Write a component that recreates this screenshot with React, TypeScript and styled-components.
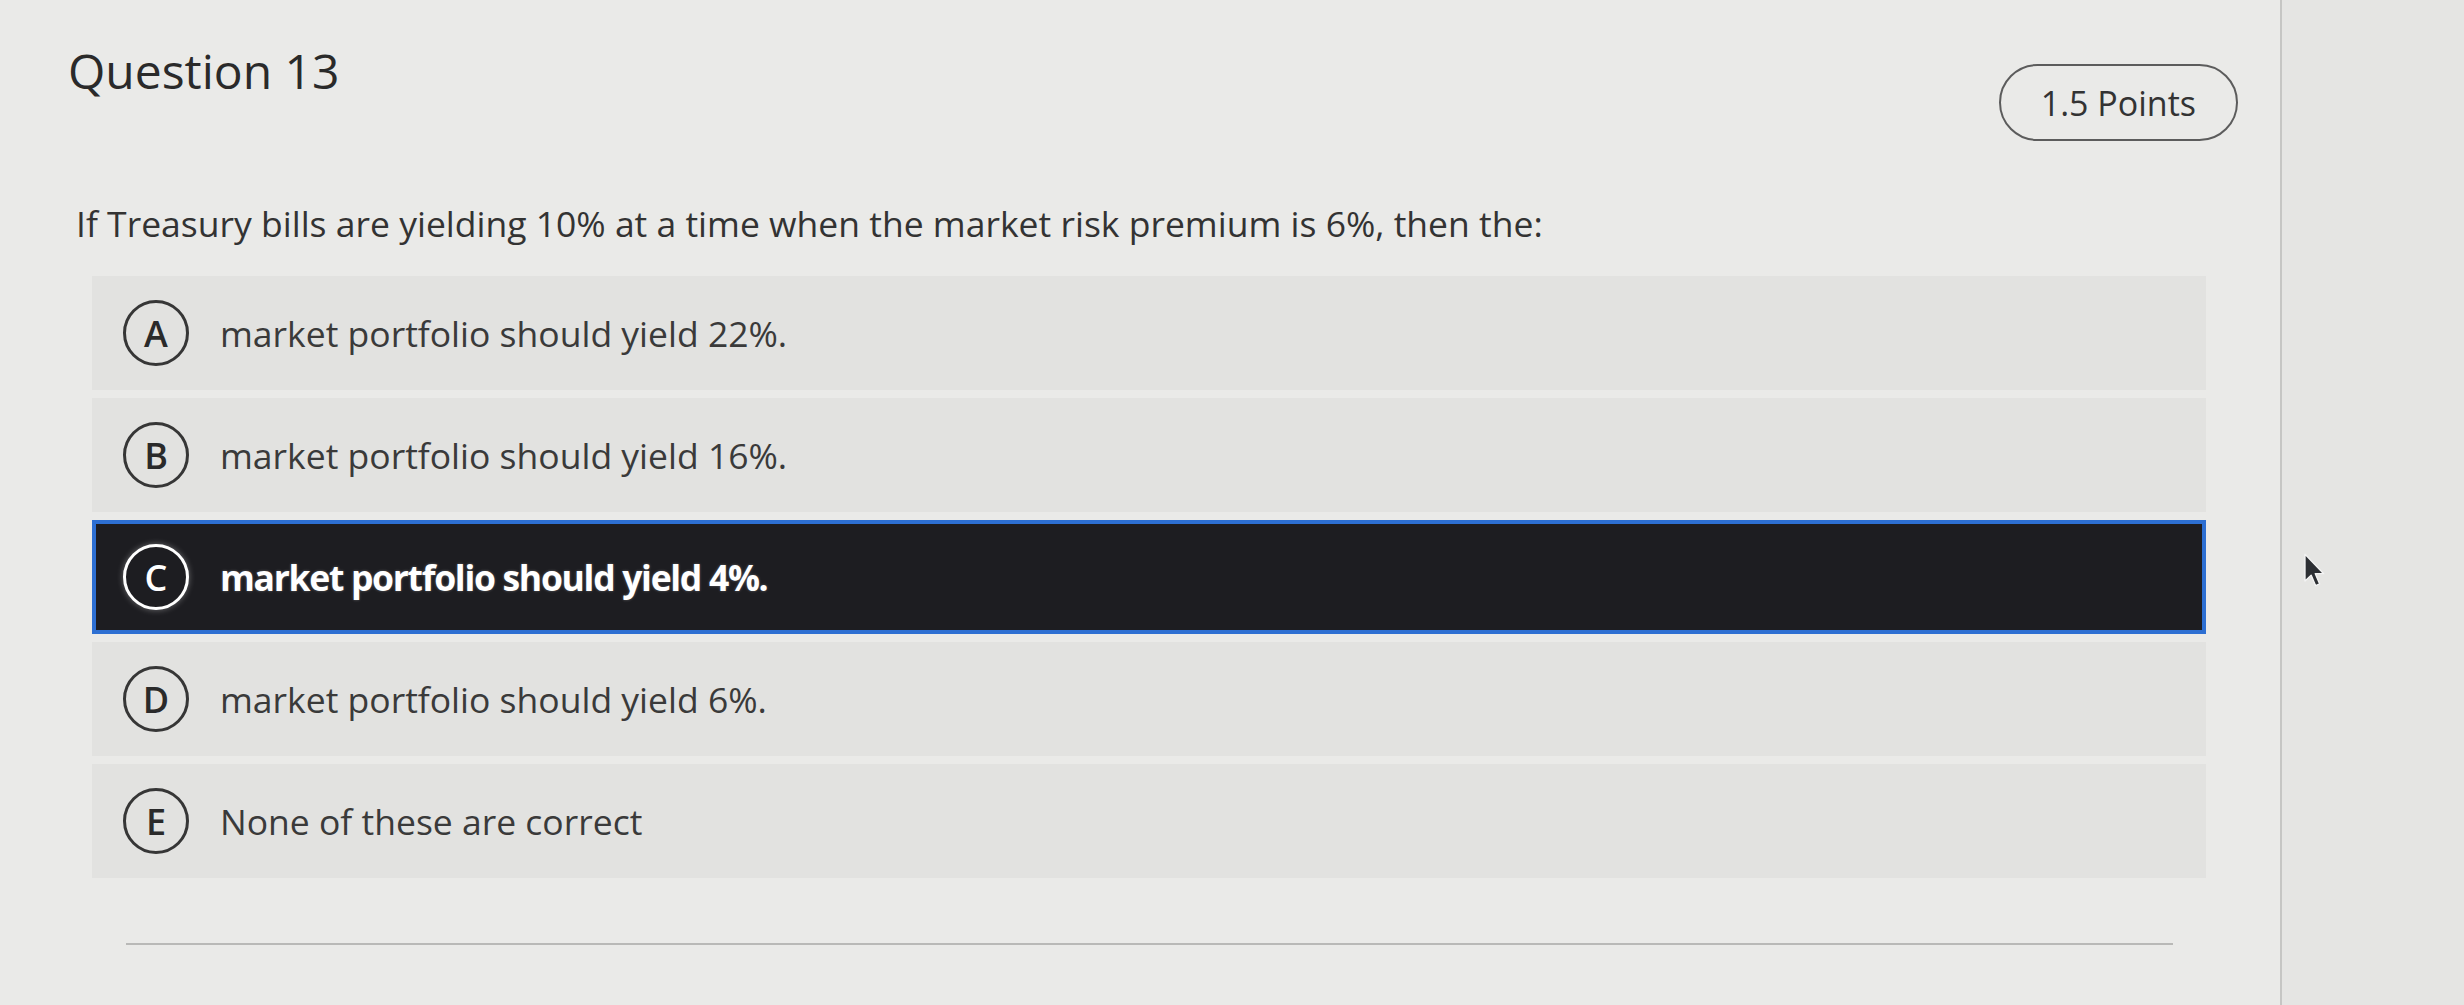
import { FunctionComponent } from 'react'
import styled, { createGlobalStyle } from 'styled-components'

interface Choice {
  letter: string
  text: string
  selected?: boolean
}

const choices: Choice[] = [
  { letter: 'A', text: 'market portfolio should yield 22%.' },
  { letter: 'B', text: 'market portfolio should yield 16%.' },
  { letter: 'C', text: 'market portfolio should yield 4%.', selected: true },
  { letter: 'D', text: 'market portfolio should yield 6%.' },
  { letter: 'E', text: 'None of these are correct' },
]

const App: FunctionComponent = () => {
  return (
    <>
      <GlobalStyle />
      <Page>
        <Main>
          <Header>
            <Title>Question 13</Title>
            <Points>1.5 Points</Points>
          </Header>
          <Prompt>
            If Treasury bills are yielding 10% at a time when the market risk premium is 6%, then the:
          </Prompt>
          <Options>
            {choices.map((c) => (
              <Option key={c.letter} $selected={!!c.selected}>
                <Letter $selected={!!c.selected}>{c.letter}</Letter>
                <OptionText $selected={!!c.selected}>{c.text}</OptionText>
              </Option>
            ))}
          </Options>
          <Divider />
        </Main>
        <Side>
          <Cursor width="24" height="36" viewBox="0 0 17 27">
            <path
              d="M1 1 L1 21 L5.6 16.6 L9 24.5 L12 23.2 L8.7 15.5 L15 15.5 Z"
              fill="#2c2f33"
              stroke="#f4f4f4"
              strokeWidth="1"
              strokeLinejoin="round"
            />
          </Cursor>
        </Side>
      </Page>
    </>
  )
}

export default App

const GlobalStyle = createGlobalStyle`
  html, body {
    margin: 0;
    padding: 0;
    background: #e9e9e7;
    font-family: "Open Sans", "Noto Sans", sans-serif;
  }
`

const Page = styled.div`
  display: flex;
  width: 2464px;
  height: 1005px;
  overflow: hidden;
  background: #eaeae8;
`

const Main = styled.div`
  width: 2280px;
  flex-shrink: 0;
  display: flex;
  flex-direction: column;
  border-right: 2px solid #c6c6c4;
`

const Header = styled.div`
  display: flex;
  justify-content: space-between;
  align-items: flex-start;
  padding: 47px 42px 0 68px;
`

const Title = styled.h1`
  margin: 0;
  font-size: 48px;
  line-height: 48px;
  font-weight: 400;
  color: #2a2a2a;
`

const Points = styled.div`
  margin-top: 17px;
  height: 77px;
  box-sizing: border-box;
  display: inline-flex;
  align-items: center;
  padding: 0 40px;
  border: 2px solid #5c5c5c;
  border-radius: 40px;
  font-size: 34px;
  color: #333;
`

const Prompt = styled.p`
  margin: 62px 0 0 76px;
  font-size: 35.5px;
  line-height: 40px;
  color: #333;
`

const Options = styled.div`
  margin: 33px 0 0 92px;
  width: 2114px;
  display: flex;
  flex-direction: column;
  gap: 8px;
`

const Option = styled.div<{ $selected: boolean }>`
  height: 114px;
  box-sizing: border-box;
  display: flex;
  align-items: center;
  gap: 31px;
  padding-left: 27px;
  background: ${(p) => (p.$selected ? '#1d1d21' : '#e2e2e0')};
  border: 4px solid ${(p) => (p.$selected ? '#2d6fd2' : 'transparent')};
`

const Letter = styled.span<{ $selected: boolean }>`
  width: 66px;
  height: 66px;
  box-sizing: border-box;
  border-radius: 50%;
  display: flex;
  align-items: center;
  justify-content: center;
  border: 3px solid ${(p) => (p.$selected ? '#ffffff' : '#363636')};
  background: ${(p) => (p.$selected ? '#1d1d21' : 'transparent')};
  color: ${(p) => (p.$selected ? '#ffffff' : '#2a2a2a')};
  font-size: 36px;
  font-weight: 600;
  box-shadow: ${(p) => (p.$selected ? '0 0 6px rgba(255,255,255,0.35)' : 'none')};
`

const OptionText = styled.span<{ $selected: boolean }>`
  font-size: 35.5px;
  color: ${(p) => (p.$selected ? '#ffffff' : '#3a3a3a')};
  font-weight: ${(p) => (p.$selected ? 700 : 400)};
  letter-spacing: ${(p) => (p.$selected ? '-1.3px' : '0')};
  text-shadow: ${(p) => (p.$selected ? '0 0 3px rgba(255,255,255,0.3)' : 'none')};
`

const Divider = styled.div`
  margin: 65px 0 0 126px;
  width: 2047px;
  border-top: 2px solid #b9b9b7;
`

const Side = styled.div`
  flex: 1;
  position: relative;
  background: #e5e5e3;
`

const Cursor = styled.svg`
  position: absolute;
  left: 21px;
  top: 553px;
`
